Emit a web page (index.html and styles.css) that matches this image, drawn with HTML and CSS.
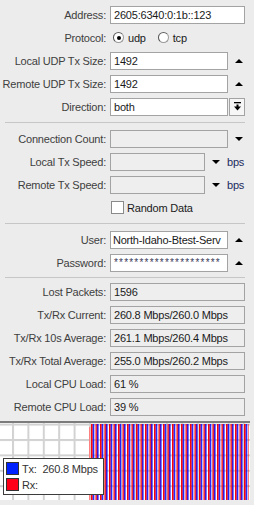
FILE: index.html
```html
<!DOCTYPE html>
<html>
<head>
<meta charset="utf-8">
<link rel="stylesheet" href="styles.css">
</head>
<body>
<div class="panel">
  <div class="row"><span class="lbl">Address:</span><div class="ctl"><div class="field edit">2605:6340:0:1b::123</div></div></div>
  <div class="row"><span class="lbl">Protocol:</span><div class="ctl radios"><span class="radio on"></span><span class="rtext">udp</span><span class="radio"></span><span class="rtext">tcp</span></div></div>
  <div class="row"><span class="lbl">Local UDP Tx Size:</span><div class="ctl"><div class="field edit">1492</div><span class="tail"><i class="tri up"></i></span></div></div>
  <div class="row"><span class="lbl">Remote UDP Tx Size:</span><div class="ctl"><div class="field edit">1492</div><span class="tail"><i class="tri up"></i></span></div></div>
  <div class="row"><span class="lbl">Direction:</span><div class="ctl"><div class="field edit">both</div><span class="btn"><svg width="9" height="9" viewBox="0 0 9 9"><rect x="1" y="0" width="7" height="1.3" fill="#000"/><rect x="3.5" y="2.5" width="2" height="2.5" fill="#000"/><polygon points="1,4.5 8,4.5 4.5,8.5" fill="#000"/></svg></span></div></div>
  <div class="sep"></div>
  <div class="row"><span class="lbl">Connection Count:</span><div class="ctl"><div class="field ro"></div><span class="tail"><i class="tri down"></i></span></div></div>
  <div class="row"><span class="lbl">Local Tx Speed:</span><div class="ctl"><div class="field ro short"></div><i class="tri down spd"></i><span class="unit">bps</span></div></div>
  <div class="row"><span class="lbl">Remote Tx Speed:</span><div class="ctl"><div class="field ro short"></div><i class="tri down spd"></i><span class="unit">bps</span></div></div>
  <div class="row"><span class="lbl"></span><div class="ctl"><span class="check"></span><span class="ctext">Random Data</span></div></div>
  <div class="sep"></div>
  <div class="row"><span class="lbl">User:</span><div class="ctl"><div class="field edit user">North-Idaho-Btest-Serv</div><span class="tail"><i class="tri up"></i></span></div></div>
  <div class="row"><span class="lbl">Password:</span><div class="ctl"><div class="field edit pw">*********************</div><span class="tail"><i class="tri up"></i></span></div></div>
  <div class="sep tight"></div>
  <div class="row"><span class="lbl">Lost Packets:</span><div class="ctl"><div class="field ro">1596</div></div></div>
  <div class="row"><span class="lbl">Tx/Rx Current:</span><div class="ctl"><div class="field ro">260.8 Mbps/260.0 Mbps</div></div></div>
  <div class="row"><span class="lbl">Tx/Rx 10s Average:</span><div class="ctl"><div class="field ro">261.1 Mbps/260.4 Mbps</div></div></div>
  <div class="row"><span class="lbl">Tx/Rx Total Average:</span><div class="ctl"><div class="field ro">255.0 Mbps/260.2 Mbps</div></div></div>
  <div class="row"><span class="lbl">Local CPU Load:</span><div class="ctl"><div class="field ro">61 %</div></div></div>
  <div class="row"><span class="lbl">Remote CPU Load:</span><div class="ctl"><div class="field ro">39 %</div></div></div>
  <div class="graph">
    <svg width="250" height="77" viewBox="0 0 250 77">
      <defs>
        <pattern id="grid" width="15.4" height="15.4" patternUnits="userSpaceOnUse" x="12" y="16">
          <rect x="0" y="0" width="2" height="15.4" fill="#d2d2d2"/>
          <rect x="0" y="0" width="15.4" height="2" fill="#d2d2d2"/>
        </pattern>
        <pattern id="bars" width="4.5" height="77" patternUnits="userSpaceOnUse" x="91" y="0">
          <rect x="0" y="0" width="1.5" height="77" fill="#ff0000"/>
          <rect x="1.7" y="0" width="1.4" height="77" fill="#0000ff"/>
        </pattern>
      </defs>
      <rect x="0" y="0" width="250" height="77" fill="#ffffff"/>
      <rect x="0" y="0" width="250" height="77" fill="url(#grid)"/>
      <rect x="89" y="4" width="1.2" height="73" fill="#ff8080"/>
      <rect x="91" y="1" width="158" height="76" fill="url(#bars)"/>
    </svg>
    <div class="legend">
      <div class="lrow"><span class="sw tx"></span><span class="ltext">Tx:  260.8 Mbps</span></div>
      <div class="lrow"><span class="sw rx"></span><span class="ltext">Rx:</span></div>
    </div>
  </div>
</div>
</body>
</html>
```

FILE: styles.css
```css
* { box-sizing: border-box; }
html, body {
  margin: 0;
  height: 505px;
  overflow: hidden;
  background: #ececec;
}
body {
  font-family: "Liberation Sans", Arial, sans-serif;
  font-size: 11px;
  letter-spacing: -0.2px;
  color: #404040;
}
.panel {
  padding-top: 3px;
}
.row {
  display: flex;
  align-items: center;
  height: 23px;
  padding-right: 9px;
}
.lbl {
  width: 106px;
  flex: none;
  text-align: right;
  white-space: nowrap;
}
.ctl {
  flex: 1;
  min-width: 0;
  margin-left: 4px;
  display: flex;
  align-items: center;
}
.field {
  flex: 1;
  min-width: 0;
  height: 18px;
  border: 1px solid #a3a3a3;
  padding: 0 3px;
  line-height: 16px;
  white-space: nowrap;
  overflow: hidden;
  color: #1a1a1a;
}
.edit { background: #ffffff; }
.ro { background: #eeeeee; }
.field.short {
  flex: none;
  width: 95px;
}
.user {
  padding: 0 2px;
  letter-spacing: -0.25px;
}
.pw {
  letter-spacing: 1.2px;
  font-size: 10px;
  color: #3a3a5a;
}
.tail {
  width: 17px;
  flex: none;
  display: flex;
  align-items: center;
  padding-left: 7px;
}
.tri {
  display: block;
  width: 0;
  height: 0;
  border-left: 4px solid transparent;
  border-right: 4px solid transparent;
}
.tri.up { border-bottom: 4px solid #000; }
.tri.down { border-top: 4px solid #000; }
.tri.spd { margin-left: 7px; }
.unit {
  margin-left: 7px;
  color: #1c2a5c;
}
.btn {
  width: 16px;
  height: 18px;
  flex: none;
  margin-left: 1px;
  border: 1px solid #a3a3a3;
  background: #f6f6f6;
  display: flex;
  align-items: center;
  justify-content: center;
}
.btn svg { display: block; }
.radios .radio {
  width: 11px;
  height: 11px;
  border-radius: 50%;
  background: #fff;
  border: 1px solid #9a9a9a;
  border-left-color: #505050;
  border-top-color: #606060;
  position: relative;
  flex: none;
}
.radios .radio:first-child { margin-left: 3px; }
.radio.on::after {
  content: "";
  position: absolute;
  left: 2.5px;
  top: 2.5px;
  width: 4px;
  height: 4px;
  border-radius: 50%;
  background: #000;
}
.rtext {
  margin-left: 4px;
  margin-right: 12px;
  color: #1a1a1a;
}
.check {
  width: 13px;
  height: 13px;
  margin-left: 1px;
  border: 1px solid #8a8a8a;
  background: #fff;
  flex: none;
}
.ctext {
  margin-left: 3px;
  color: #1a1a1a;
}
.sep {
  height: 1px;
  background: #c6c6c6;
  margin: 4px 9px 4px 5px;
}
.sep.tight {
  margin-top: 3px;
  margin-bottom: 2px;
}
.graph {
  position: relative;
  margin-top: 3px;
  width: 250px;
  height: 79px;
  border-top: 2px solid #7c7c7c;
  background: #fff;
}
.graph svg { display: block; }
.legend {
  position: absolute;
  left: 3px;
  top: 35px;
  width: 101px;
  height: 37px;
  background: #fff;
  border: 1px solid #3c3c3c;
  padding: 3px 2px;
  display: flex;
  flex-direction: column;
  gap: 3px;
}
.lrow {
  display: flex;
  align-items: center;
  height: 13px;
}
.sw {
  width: 13px;
  height: 13px;
  flex: none;
  border: 1px solid #333;
}
.sw.tx { background: #0022ff; }
.sw.rx { background: #ff0018; }
.ltext {
  margin-left: 3px;
  white-space: pre;
  color: #333;
}
```
